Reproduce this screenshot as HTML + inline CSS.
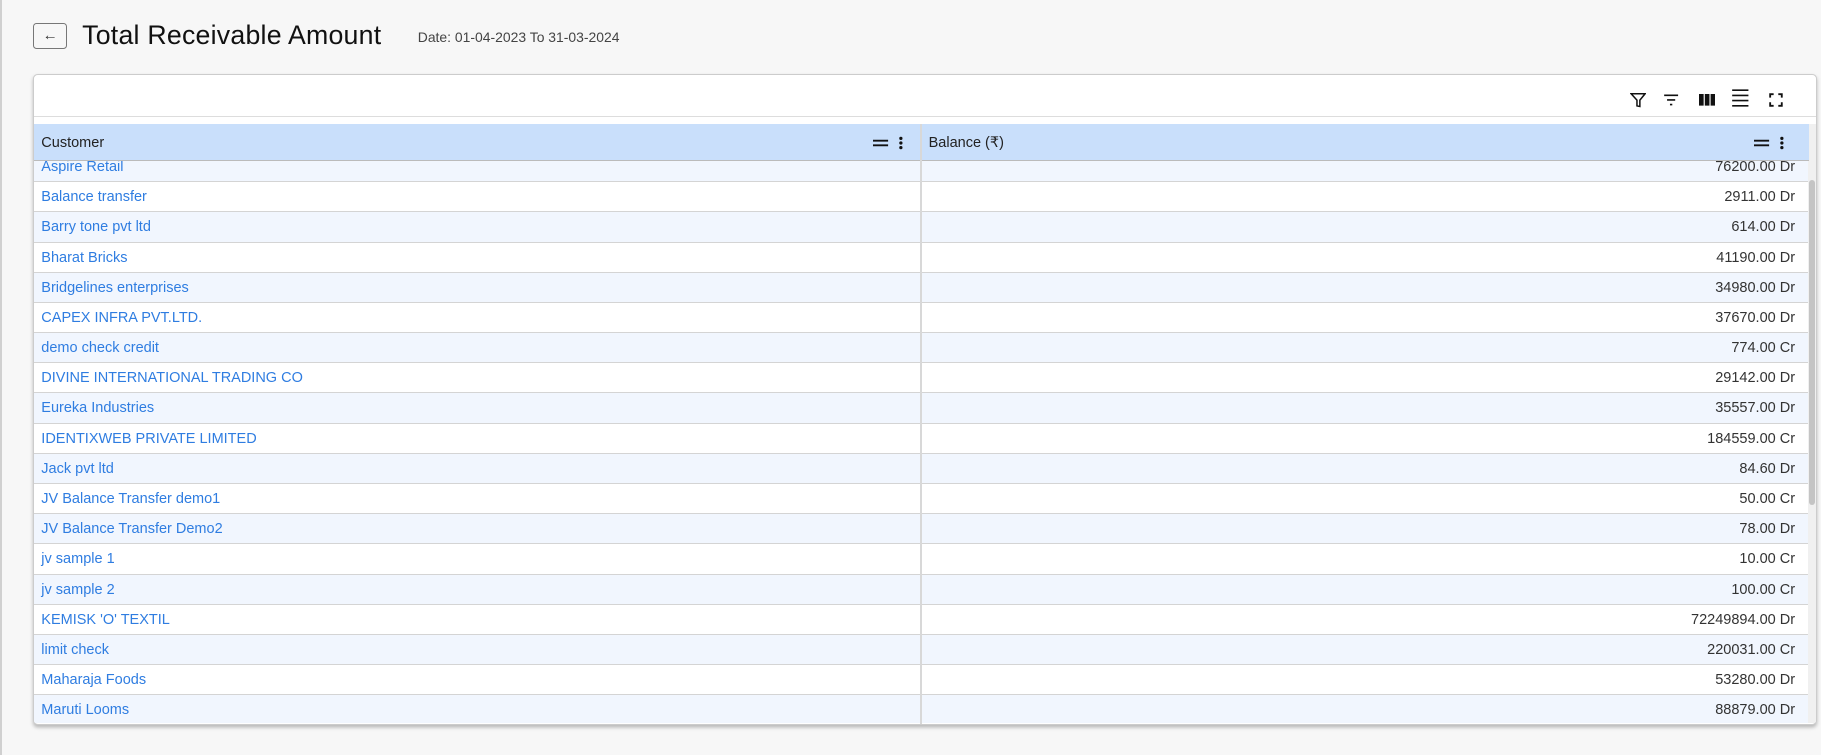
<!DOCTYPE html>
<html><head><style>
*{box-sizing:border-box;margin:0;padding:0}
body{width:1821px;height:755px;background:#f7f7f7;font-family:"Liberation Sans",sans-serif;overflow:hidden}
.wrap{zoom:1.1614;width:1568px;height:650px;position:relative;border-left:2px solid #d0d0d0}
.back{position:absolute;left:27px;top:20px;width:29px;height:22px;border:1px solid #777;border-radius:3px;font-size:13px;text-align:center;line-height:20px;color:#333}
h1{position:absolute;left:69px;top:17px;font-weight:normal;font-size:23px;color:#111;letter-spacing:0.2px}
.date{position:absolute;left:358px;top:25px;font-size:12px;color:#444}
.card{position:absolute;left:27px;top:64px;width:1536px;height:560px;background:#fff;border:1px solid #ccc;border-radius:4px;box-shadow:0 2px 3px rgba(0,0,0,.25);overflow:hidden}
.tb{height:36px;border-bottom:1px solid #ddd}
.head{position:absolute;left:0;top:42px;width:1528px;height:32px;background:#c9dffb;border-bottom:1px solid #bbb;font-size:12.5px;color:#222;z-index:2}
.head div{position:absolute;top:9px}
.body{position:absolute;left:0;top:74px;width:1528px;height:484px;overflow:hidden}
.rows{position:absolute;top:-8px;left:0;width:100%}
.r{height:26px;border-bottom:1px solid #d4d4d4;position:relative;font-size:12.5px}
.r:nth-child(odd){background:#f1f6fe}
.r:nth-child(even){background:#fff}
.r .c{position:absolute;left:6px;top:6px;color:#2f7de1}
.r .b{position:absolute;right:12px;top:6px;color:#333}
.vl{position:absolute;left:763px;top:42px;width:1px;height:520px;background:#d8d8d8;z-index:3}
.sb{position:absolute;right:0;top:42px;width:7px;height:516px;background:#f0f0f0}
.sb i{position:absolute;left:1px;top:48px;width:5px;height:280px;background:#c4c4c4;border-radius:3px}
</style></head><body><div class="wrap">
<div class="back">←</div>
<h1>Total Receivable Amount</h1>
<div class="date">Date: 01-04-2023 To 31-03-2024</div>
<div class="card">
<div class="tb">
<svg style="position:absolute;left:1374px;top:14px" width="14" height="14" viewBox="0 0 14 14"><path d="M1 1.5h12L8.5 7v5.5L6 12V7z" fill="none" stroke="#111" stroke-width="1.3"/></svg>
<svg style="position:absolute;left:1402px;top:15px" width="14" height="12"><path d="M1 2h12M3.5 6h7M6 10h2" stroke="#111" stroke-width="1.4"/></svg>
<svg style="position:absolute;left:1433px;top:16px" width="14" height="10"><rect x="0" y="0" width="4" height="10" fill="#111"/><rect x="5" y="0" width="4" height="10" fill="#111"/><rect x="10" y="0" width="4" height="10" fill="#111"/></svg>
<svg style="position:absolute;left:1461px;top:12px" width="16" height="18"><path d="M1 1h14M1 5.5h14M1 10h14M1 14.5h14" stroke="#111" stroke-width="1.4"/></svg>
<svg style="position:absolute;left:1494px;top:15px" width="12" height="12"><path d="M1 4V1h3M8 1h3v3M11 8v3H8M4 11H1V8" fill="none" stroke="#111" stroke-width="1.6"/></svg>
</div>
<div class="head">
<div style="left:6px">Customer</div>
<div style="left:770px">Balance (₹)</div>
<svg style="position:absolute;left:722px;top:10px" width="26" height="12"><path d="M0 4h13M0 8h13" stroke="#111" stroke-width="1.6"/><circle cx="24" cy="2" r="1.4" fill="#111"/><circle cx="24" cy="6" r="1.4" fill="#111"/><circle cx="24" cy="10" r="1.4" fill="#111"/></svg>
<svg style="position:absolute;left:1481px;top:10px" width="26" height="12"><path d="M0 4h13M0 8h13" stroke="#111" stroke-width="1.6"/><circle cx="24" cy="2" r="1.4" fill="#111"/><circle cx="24" cy="6" r="1.4" fill="#111"/><circle cx="24" cy="10" r="1.4" fill="#111"/></svg>
</div>
<div class="vl"></div>
<div class="body"><div class="rows">
<div class="r"><span class="c">Aspire Retail</span><span class="b">76200.00 Dr</span></div>
<div class="r"><span class="c">Balance transfer</span><span class="b">2911.00 Dr</span></div>
<div class="r"><span class="c">Barry tone pvt ltd</span><span class="b">614.00 Dr</span></div>
<div class="r"><span class="c">Bharat Bricks</span><span class="b">41190.00 Dr</span></div>
<div class="r"><span class="c">Bridgelines enterprises</span><span class="b">34980.00 Dr</span></div>
<div class="r"><span class="c">CAPEX INFRA PVT.LTD.</span><span class="b">37670.00 Dr</span></div>
<div class="r"><span class="c">demo check credit</span><span class="b">774.00 Cr</span></div>
<div class="r"><span class="c">DIVINE INTERNATIONAL TRADING CO</span><span class="b">29142.00 Dr</span></div>
<div class="r"><span class="c">Eureka Industries</span><span class="b">35557.00 Dr</span></div>
<div class="r"><span class="c">IDENTIXWEB PRIVATE LIMITED</span><span class="b">184559.00 Cr</span></div>
<div class="r"><span class="c">Jack pvt ltd</span><span class="b">84.60 Dr</span></div>
<div class="r"><span class="c">JV Balance Transfer demo1</span><span class="b">50.00 Cr</span></div>
<div class="r"><span class="c">JV Balance Transfer Demo2</span><span class="b">78.00 Dr</span></div>
<div class="r"><span class="c">jv sample 1</span><span class="b">10.00 Cr</span></div>
<div class="r"><span class="c">jv sample 2</span><span class="b">100.00 Cr</span></div>
<div class="r"><span class="c">KEMISK 'O' TEXTIL</span><span class="b">72249894.00 Dr</span></div>
<div class="r"><span class="c">limit check</span><span class="b">220031.00 Cr</span></div>
<div class="r"><span class="c">Maharaja Foods</span><span class="b">53280.00 Dr</span></div>
<div class="r"><span class="c">Maruti Looms</span><span class="b">88879.00 Dr</span></div>
</div></div>
<div class="sb"><i></i></div>
</div>
</div></body></html>
